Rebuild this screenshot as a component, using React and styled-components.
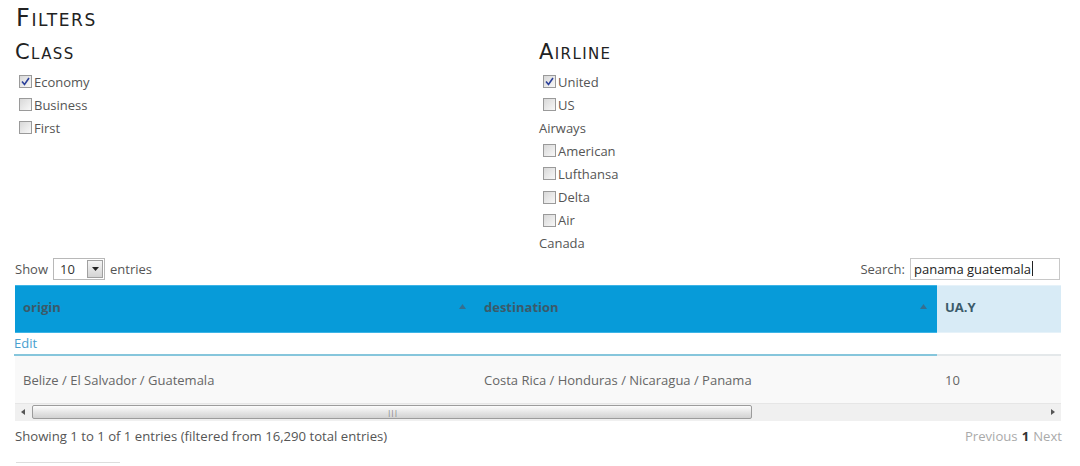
import React from "react";
import styled, { createGlobalStyle } from "styled-components";

const Global = createGlobalStyle`
  html, body { margin: 0; padding: 0; background: #fff; }
  body { font-family: "Open Sans", "Liberation Sans", sans-serif; font-size: 13px; color: #555; }
`;

const Page = styled.div`
  width: 1047px;
  padding: 0 0 0 15px;
`;

const Title = styled.h2`
  margin: 0;
  padding: 4px 0 0 1px;
  font-family: "DejaVu Sans", sans-serif;
  font-variant: small-caps;
  font-weight: normal;
  font-size: 24px;
  line-height: 28px;
  color: #222;
  letter-spacing: 1.6px;
`;

const Filters = styled.div`
  display: grid;
  grid-template-columns: 524px 1fr;
  margin-top: 8px;
`;

const Group = styled.div``;

const GroupTitle = styled.h3`
  margin: 0 0 6px 0;
  font-family: "DejaVu Sans", sans-serif;
  font-variant: small-caps;
  font-weight: normal;
  font-size: 21px;
  line-height: 24px;
  color: #222;
  letter-spacing: 1.4px;
`;

const Item = styled.div`
  display: flex;
  align-items: center;
  height: 23.1px;
  padding-left: ${(p) => (p.$bare ? 0 : 4)}px;
  color: #555;
  font-size: 13px;
`;

const Box = styled.span`
  box-sizing: border-box;
  width: 13px;
  height: 13px;
  margin-right: 2px;
  border: 1px solid #9a9a9a;
  background: linear-gradient(135deg, #d8d8d8, #f8f8f8);
  display: inline-flex;
  align-items: center;
  justify-content: center;
`;

const Check = ({ checked }) => (
  <Box>
    {checked && (
      <svg width="9" height="9" viewBox="0 0 9 9">
        <path d="M1 4.5 L3.5 7.5 L8 1" fill="none" stroke="#2a3f9a" strokeWidth="1.6" />
      </svg>
    )}
  </Box>
);

const Controls = styled.div`
  display: flex;
  justify-content: space-between;
  align-items: center;
  height: 28px;
  padding-right: 2px;
`;

const Label = styled.div`
  display: flex;
  align-items: center;
  gap: 5px;
  color: #555;
`;

const Select = styled.div`
  box-sizing: border-box;
  width: 52px;
  height: 22px;
  border: 1px solid #b8b8b8;
  display: flex;
  align-items: center;
  justify-content: space-between;
  padding-left: 6px;
  padding-right: 1px;
  color: #333;
  background: #fff;
`;

const SelectBtn = styled.span`
  box-sizing: border-box;
  width: 16px;
  height: 18px;
  border: 1px solid #a0a0a0;
  background: linear-gradient(#f4f4f4, #d4d4d4);
  display: flex;
  align-items: center;
  justify-content: center;
`;

const SearchInput = styled.div`
  box-sizing: border-box;
  width: 150px;
  height: 22px;
  border: 1px solid #c8c8c8;
  padding-left: 3px;
  display: flex;
  align-items: center;
  color: #222;
`;

const Caret = styled.span`
  display: inline-block;
  width: 1px;
  height: 15px;
  background: #222;
  margin-left: 1px;
`;

const Table = styled.div`
  margin-top: 2px;
  width: 1046px;
  display: grid;
  grid-template-columns: 461px 461px 124px;
`;

const Th = styled.div`
  height: 48px;
  box-sizing: border-box;
  background: ${(p) => (p.$light ? "#d8ebf6" : "#079bd9")};
  border-top: 1px solid ${(p) => (p.$light ? "#e6f2f9" : "#3db4e6")};
  border-bottom: 1px solid ${(p) => (p.$light ? "#e6f2f9" : "#3db4e6")};
  display: flex;
  align-items: center;
  justify-content: space-between;
  padding: 0 10px 4px 8px;
  font-weight: bold;
  color: #3b5a6a;
  font-size: 13px;
`;

const Arrow = () => (
  <svg width="7" height="5" viewBox="0 0 7 5">
    <path d="M0 5 L3.5 0 L7 5 Z" fill="#356f90" />
  </svg>
);

const EditCell = styled.div`
  height: 23px;
  box-sizing: border-box;
  border-bottom: 2px solid ${(p) => (p.$light ? "#e4e8ea" : "#86c6dc")};
  display: flex;
  align-items: center;
  margin-left: ${(p) => (p.$first ? -1 : 0)}px;
  color: #48a0cf;
`;

const Td = styled.div`
  height: 47px;
  background: #f9f9f9;
  display: flex;
  align-items: center;
  padding-left: 8px;
  padding-top: 1px;
  box-sizing: border-box;
  color: #666;
`;

const Scroll = styled.div`
  grid-column: 1 / 4;
  height: 17px;
  background: #f0f0f0;
  border-top: 1px solid #e6e6e6;
  display: flex;
  align-items: center;
`;

const ScrollArrow = styled.span`
  width: 16px;
  display: flex;
  justify-content: center;
`;

const Thumb = styled.div`
  box-sizing: border-box;
  margin-left: 1px;
  width: 720px;
  height: 14px;
  border: 1px solid #9c9c9c;
  border-radius: 2px;
  background: linear-gradient(#fdfdfd, #e2e2e2 60%, #d2d2d2);
  display: flex;
  align-items: center;
  justify-content: center;
`;

const Grip = styled.span`
  font-size: 8px;
  letter-spacing: -1px;
  color: #777;
  line-height: 8px;
`;

const Spacer = styled.span`
  flex: 1;
`;

const Footer = styled.div`
  display: flex;
  justify-content: space-between;
  align-items: center;
  width: 1047px;
  height: 31px;
  font-size: 13.15px;
`;

const Pager = styled.div`
  color: #aaa;
  display: flex;
  gap: 4px;
`;

const Current = styled.span`
  color: #333;
  font-weight: bold;
`;

const Rule = styled.div`
  margin-top: 10px;
  margin-left: 1px;
  width: 104px;
  height: 1px;
  background: #ddd;
`;

export default function App() {
  return (
    <Page>
      <Global />
      <Title>Filters</Title>
      <Filters>
        <Group>
          <GroupTitle>Class</GroupTitle>
          <Item><Check checked />Economy</Item>
          <Item><Check />Business</Item>
          <Item><Check />First</Item>
        </Group>
        <Group>
          <GroupTitle>Airline</GroupTitle>
          <Item><Check checked />United</Item>
          <Item><Check />US</Item>
          <Item $bare>Airways</Item>
          <Item><Check />American</Item>
          <Item><Check />Lufthansa</Item>
          <Item><Check />Delta</Item>
          <Item><Check />Air</Item>
          <Item $bare>Canada</Item>
        </Group>
      </Filters>
      <Controls>
        <Label>
          Show
          <Select>
            10
            <SelectBtn>
              <svg width="7" height="4" viewBox="0 0 7 4">
                <path d="M0 0 L7 0 L3.5 4 Z" fill="#222" />
              </svg>
            </SelectBtn>
          </Select>
          entries
        </Label>
        <Label>
          Search:
          <SearchInput>
            panama guatemala<Caret />
          </SearchInput>
        </Label>
      </Controls>
      <Table>
        <Th>origin<Arrow /></Th>
        <Th>destination<Arrow /></Th>
        <Th $light>UA.Y</Th>
        <EditCell $first>Edit</EditCell>
        <EditCell />
        <EditCell $light />
        <Td>Belize / El Salvador / Guatemala</Td>
        <Td>Costa Rica / Honduras / Nicaragua / Panama</Td>
        <Td>10</Td>
        <Scroll>
          <ScrollArrow>
            <svg width="4" height="6" viewBox="0 0 4 6"><path d="M4 0 L0 3 L4 6 Z" fill="#555" /></svg>
          </ScrollArrow>
          <Thumb><Grip>|||</Grip></Thumb>
          <Spacer />
          <ScrollArrow>
            <svg width="4" height="6" viewBox="0 0 4 6"><path d="M0 0 L4 3 L0 6 Z" fill="#555" /></svg>
          </ScrollArrow>
        </Scroll>
      </Table>
      <Footer>
        <span>Showing 1 to 1 of 1 entries (filtered from 16,290 total entries)</span>
        <Pager>Previous <Current>1</Current> Next</Pager>
      </Footer>
      <Rule />
    </Page>
  );
}
